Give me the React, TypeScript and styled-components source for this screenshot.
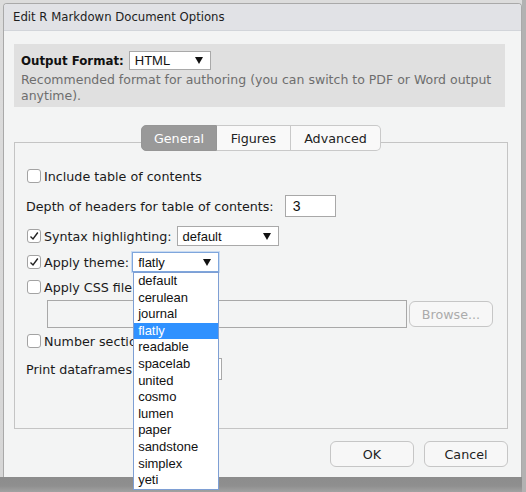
import styled, { createGlobalStyle } from "styled-components";

const GlobalStyle = createGlobalStyle`
  html, body {
    margin: 0;
    padding: 0;
  }
  body {
    font-family: "DejaVu Sans", "Liberation Sans", sans-serif;
    color: #222;
  }
  * {
    box-sizing: border-box;
  }
`;

const themes = [
  "default",
  "cerulean",
  "journal",
  "flatly",
  "readable",
  "spacelab",
  "united",
  "cosmo",
  "lumen",
  "paper",
  "sandstone",
  "simplex",
  "yeti",
];

export const Backdrop = styled.div`
  width: 526px;
  height: 492px;
  padding: 3px 4px 0 3px;
  overflow: hidden;
  background:
    linear-gradient(to right, transparent 522px, #b2b2b2 522px),
    linear-gradient(#dcdcdc 0, #d6d6d6 477px, #8c8c8c 477px, #8f8f8f 486px, #a2a2a2 492px);
`;

export const Dialog = styled.div`
  width: 519px;
  height: 474px;
  display: flex;
  flex-direction: column;
  background: #f3f4f4;
  border: 1px solid #a9a9a9;
  border-bottom: none;
  border-radius: 4px 4px 0 0;
`;

export const TitleBar = styled.div`
  height: 27px;
  flex: none;
  padding-left: 9px;
  display: flex;
  align-items: center;
  background: #e1e2e6;
  border-bottom: 1px solid #d2d5da;
  border-radius: 3px 3px 0 0;
  font-size: 11.7px;
  color: #1e1e1e;
`;

export const Body = styled.div`
  flex: 1;
  display: flex;
  flex-direction: column;
  padding: 13px 13px 0 10px;
`;

export const FormatBox = styled.div`
  height: 63px;
  margin-right: 3px;
  padding: 7px 7px 0 7px;
  background: #e0e0e0;
`;

export const FormatRow = styled.div`
  display: flex;
  align-items: center;
  gap: 5px;
  height: 19px;
`;

export const BoldLabel = styled.span`
  font-weight: bold;
  font-size: 11.8px;
  color: #111;
`;

export const Hint = styled.div`
  margin-top: 2px;
  font-size: 12.5px;
  line-height: 16px;
  color: #6e6e6e;
`;

export const Select = styled.div<{ $w: number; $h?: number; $focus?: boolean }>`
  position: relative;
  width: ${({ $w }) => $w}px;
  height: ${({ $h }) => $h ?? 20}px;
  flex: none;
  display: flex;
  align-items: center;
  justify-content: space-between;
  padding: 0 7px 0 5px;
  background: #fff;
  border: 1px solid ${({ $focus }) => ($focus ? "#7fa6dc" : "#a9a9a9")};
  box-shadow: ${({ $focus }) => ($focus ? "0 0 0 1px #c9dbf2" : "none")};
  font-family: "Liberation Sans", Arial, sans-serif;
  font-size: 13px;
  color: #111;
`;

export const Arrow = () => (
  <svg width="8" height="7" viewBox="0 0 8 7">
    <path d="M0 0 L8 0 L4 7 Z" fill="#111" />
  </svg>
);

export const TabBar = styled.div`
  margin-top: 18px;
  display: flex;
  justify-content: center;
  position: relative;
  z-index: 1;
`;

export const Tab = styled.div<{ $active?: boolean; $w: number; $pos: "first" | "mid" | "last" }>`
  width: ${({ $w }) => $w}px;
  height: 26px;
  display: flex;
  align-items: center;
  justify-content: center;
  font-size: 12.7px;
  color: ${({ $active }) => ($active ? "#fff" : "#222")};
  background: ${({ $active }) => ($active ? "#999999" : "#f9f9f9")};
  border: 1px solid ${({ $active }) => ($active ? "#969696" : "#c9c9c9")};
  border-left-width: ${({ $pos }) => ($pos === "first" ? 1 : 0)}px;
  border-radius: ${({ $pos }) =>
    $pos === "first" ? "5px 0 0 5px" : $pos === "last" ? "0 5px 5px 0" : "0"};
`;

export const Panel = styled.div`
  margin-top: -9px;
  height: 287px;
  border: 1px solid #c4c4c4;
  padding: 23px 12px 0 11px;
  display: flex;
  flex-direction: column;
`;

export const Row = styled.div<{ $top: number; $h?: number; $indent?: number; $gap?: number }>`
  margin-top: ${({ $top }) => $top}px;
  height: ${({ $h }) => $h ?? 20}px;
  margin-left: ${({ $indent }) => $indent ?? 0}px;
  display: flex;
  align-items: center;
  gap: ${({ $gap }) => $gap ?? 5}px;
  font-size: 12.7px;
  color: #1a1a1a;
  position: relative;
`;

export const CheckLabel = styled.label`
  display: flex;
  align-items: center;
  gap: 3px;
  margin-left: 1px;
`;

export const Box = styled.span`
  width: 14px;
  height: 14px;
  flex: none;
  display: flex;
  align-items: center;
  justify-content: center;
  background: #fff;
  border: 1px solid #a3a3a3;
  border-radius: 3px;
`;

const Check = ({ on, children }: { on?: boolean; children: React.ReactNode }) => (
  <CheckLabel>
    <Box>
      {on && (
        <svg width="10" height="10" viewBox="0 0 10 10">
          <path d="M1.5 5.5 L4 8 L8.8 1.5" fill="none" stroke="#222" strokeWidth="1.4" />
        </svg>
      )}
    </Box>
    {children}
  </CheckLabel>
);

export const TextInput = styled.div<{ $w: number; $h: number; $bg?: string }>`
  width: ${({ $w }) => $w}px;
  height: ${({ $h }) => $h}px;
  flex: none;
  display: flex;
  align-items: center;
  padding-left: 7px;
  background: ${({ $bg }) => $bg ?? "#fff"};
  border: 1px solid #a8a8a8;
  font-family: "Liberation Sans", Arial, sans-serif;
  font-size: 14px;
  color: #111;
`;

export const Button = styled.div<{ $disabled?: boolean; $h?: number }>`
  width: 84px;
  height: ${({ $h }) => $h ?? 26}px;
  flex: none;
  display: flex;
  align-items: center;
  justify-content: center;
  background: #f7f7f7;
  border: 1px solid #c6c6c6;
  border-radius: 6px;
  font-size: 12.7px;
  color: ${({ $disabled }) => ($disabled ? "#ababab" : "#1e1e1e")};
`;

export const Footer = styled.div`
  margin-top: 12px;
  display: flex;
  justify-content: flex-end;
  gap: 10px;
`;

export const DropList = styled.div`
  position: absolute;
  top: 19px;
  left: 0;
  width: 86px;
  z-index: 5;
  background: #fff;
  border: 1px solid #7e9fd4;
  font-family: "Liberation Sans", Arial, sans-serif;
  font-size: 13px;
`;

export const Option = styled.div<{ $selected?: boolean }>`
  height: 16.6px;
  line-height: 16.6px;
  padding-left: 4px;
  color: ${({ $selected }) => ($selected ? "#fff" : "#111")};
  background: ${({ $selected }) => ($selected ? "#2f91ff" : "transparent")};
`;

export default function App() {
  return (
    <>
      <GlobalStyle />
      <Backdrop>
        <Dialog>
          <TitleBar>Edit R Markdown Document Options</TitleBar>
          <Body>
            <FormatBox>
              <FormatRow>
                <BoldLabel>Output Format:</BoldLabel>
                <Select $w={82} $h={19}>
                  HTML
                  <Arrow />
                </Select>
              </FormatRow>
              <Hint>
                Recommended format for authoring (you can switch to PDF or Word output
                anytime).
              </Hint>
            </FormatBox>

            <TabBar>
              <Tab $active $w={76} $pos="first">General</Tab>
              <Tab $w={74} $pos="mid">Figures</Tab>
              <Tab $w={90} $pos="last">Advanced</Tab>
            </TabBar>

            <Panel>
              <Row $top={0}>
                <Check>Include table of contents</Check>
              </Row>
              <Row $top={9} $h={22} $gap={11}>
                <span>Depth of headers for table of contents:</span>
                <TextInput $w={51} $h={22}>3</TextInput>
              </Row>
              <Row $top={9}>
                <Check on>Syntax highlighting:</Check>
                <Select $w={102}>
                  default
                  <Arrow />
                </Select>
              </Row>
              <Row $top={6} $gap={3}>
                <Check on>Apply theme:</Check>
                <Select $w={87} $focus>
                  flatly
                  <Arrow />
                  <DropList>
                    {themes.map((t) => (
                      <Option key={t} $selected={t === "flatly"}>
                        {t}
                      </Option>
                    ))}
                  </DropList>
                </Select>
              </Row>
              <Row $top={5}>
                <Check>Apply CSS file</Check>
              </Row>
              <Row $top={3} $h={28} $indent={21} $gap={2}>
                <TextInput $w={360} $h={28} $bg="#f3f4f4" />
                <Button $disabled>Browse...</Button>
              </Row>
              <Row $top={3}>
                <Check>Number sections</Check>
              </Row>
              <Row $top={7} $h={22}>
                <span>Print dataframes as:</span>
                <Select $w={62} $h={22}>
                  default
                  <Arrow />
                </Select>
              </Row>
            </Panel>

            <Footer>
              <Button>OK</Button>
              <Button>Cancel</Button>
            </Footer>
          </Body>
        </Dialog>
      </Backdrop>
    </>
  );
}
